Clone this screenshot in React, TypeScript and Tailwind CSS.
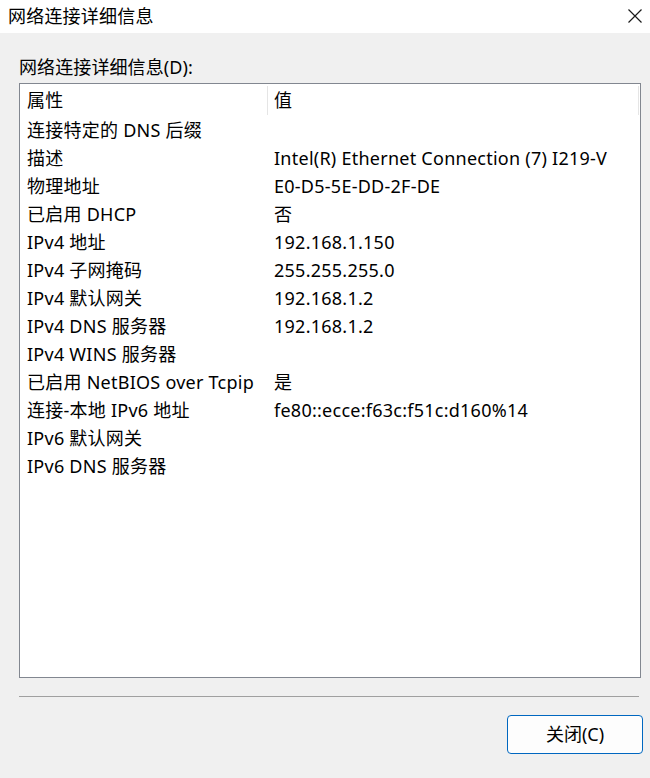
const rows: [string, string][] = [
  ["连接特定的 DNS 后缀", ""],
  ["描述", "Intel(R) Ethernet Connection (7) I219-V"],
  ["物理地址", "E0-D5-5E-DD-2F-DE"],
  ["已启用 DHCP", "否"],
  ["IPv4 地址", "192.168.1.150"],
  ["IPv4 子网掩码", "255.255.255.0"],
  ["IPv4 默认网关", "192.168.1.2"],
  ["IPv4 DNS 服务器", "192.168.1.2"],
  ["IPv4 WINS 服务器", ""],
  ["已启用 NetBIOS over Tcpip", "是"],
  ["连接-本地 IPv6 地址", "fe80::ecce:f63c:f51c:d160%14"],
  ["IPv6 默认网关", ""],
  ["IPv6 DNS 服务器", ""],
];

export default function App() {
  return (
    <div className="flex h-[778px] w-[650px] flex-col bg-[#f0f0f0] font-['Noto_Sans','Noto_Sans_CJK_SC',sans-serif] text-[18px] text-black">
      {/* 标题栏 */}
      <div className="flex h-[33px] items-center justify-between bg-white pl-[8px] pr-[8px]">
        <span className="leading-[33px] tracking-[0.2px]">网络连接详细信息</span>
        <svg width="14" height="14" viewBox="0 0 14 14" className="mt-[-2px]">
          <path d="M0.5 0.5 L13.5 13.5 M13.5 0.5 L0.5 13.5" stroke="#1a1a1a" strokeWidth="1.2" />
        </svg>
      </div>

      <div className="flex flex-1 flex-col pl-[19px] pr-[9px] pt-[23px]">
        <div className="mb-[5px] h-[22px] leading-[22px] tracking-[0.1px]">网络连接详细信息(D):</div>

        {/* 列表 */}
        <div className="h-[595px] border border-[#828790] bg-white tracking-[0.25px]">
          <div className="flex h-[32px]">
            <div className="flex w-[247px] items-center pl-[7px] leading-[32px]">属性</div>
            <div className="mt-[2px] h-[29px] w-px bg-[#e5e5e5]" />
            <div className="flex w-[370px] items-center pl-[6px] leading-[32px]">值</div>
            <div className="mt-[2px] h-[29px] w-px bg-[#e5e5e5]" />
          </div>
          {rows.map(([k, v]) => (
            <div key={k} className="flex h-[28px] items-center leading-[28px]">
              <div className="w-[248px] whitespace-nowrap pl-[7px]">{k}</div>
              <div className="whitespace-nowrap pl-[6px]">{v}</div>
            </div>
          ))}
        </div>

        <div className="mr-[2px] mt-[18px] h-px bg-[#a0a0a0]" />

        <div className="mt-[18px] flex justify-end">
          <button className="-mr-[2px] h-[39px] w-[136px] rounded-[4px] border border-[#0067c0] bg-[#fdfdfd] text-[18px] leading-[37px]">
            关闭(C)
          </button>
        </div>
      </div>
    </div>
  );
}
